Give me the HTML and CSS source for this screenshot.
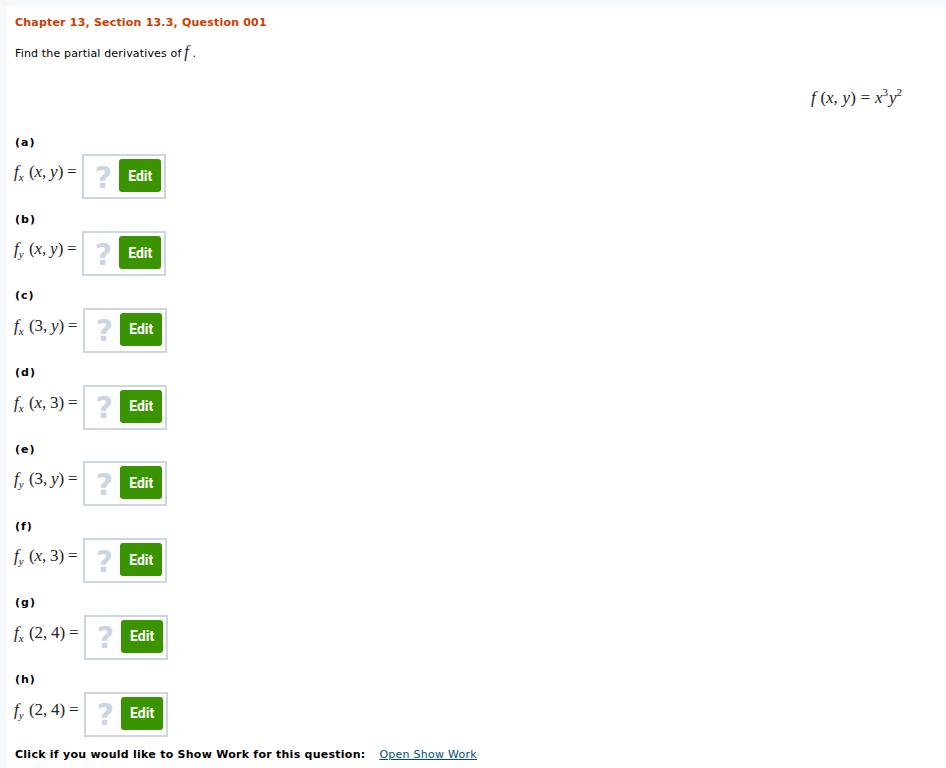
FILE: index.html
```html
<!DOCTYPE html>
<html lang="en">
<head>
  <meta charset="UTF-8">
  <title>Chapter 13, Section 13.3, Question 001</title>
  <link rel="stylesheet" href="styles.css">
</head>
<body>

  <div class="page">
    <h1 class="title">Chapter 13, Section 13.3, Question 001</h1>
    <p class="intro">Find the partial derivatives of <i class="math inline-f">f</i> .</p>

    <div class="equation math"><i>f</i> (<i>x</i>, <i>y</i>) = <i>x</i><sup>3</sup><i>y</i><sup>2</sup></div>

    <div class="part">
      <div class="part-label">(a)</div>
      <div class="part-row">
        <span class="math"><i>f<sub>x</sub></i> (<i>x</i>, <i>y</i>) =</span>
        <div class="answer"><span class="unknown">?</span><button class="edit-btn">Edit</button></div>
      </div>
    </div>

    <div class="part">
      <div class="part-label">(b)</div>
      <div class="part-row">
        <span class="math"><i>f<sub>y</sub></i> (<i>x</i>, <i>y</i>) =</span>
        <div class="answer"><span class="unknown">?</span><button class="edit-btn">Edit</button></div>
      </div>
    </div>

    <div class="part">
      <div class="part-label">(c)</div>
      <div class="part-row">
        <span class="math"><i>f<sub>x</sub></i> (3, <i>y</i>) =</span>
        <div class="answer"><span class="unknown">?</span><button class="edit-btn">Edit</button></div>
      </div>
    </div>

    <div class="part">
      <div class="part-label">(d)</div>
      <div class="part-row">
        <span class="math"><i>f<sub>x</sub></i> (<i>x</i>, 3) =</span>
        <div class="answer"><span class="unknown">?</span><button class="edit-btn">Edit</button></div>
      </div>
    </div>

    <div class="part">
      <div class="part-label">(e)</div>
      <div class="part-row">
        <span class="math"><i>f<sub>y</sub></i> (3, <i>y</i>) =</span>
        <div class="answer"><span class="unknown">?</span><button class="edit-btn">Edit</button></div>
      </div>
    </div>

    <div class="part">
      <div class="part-label">(f)</div>
      <div class="part-row">
        <span class="math"><i>f<sub>y</sub></i> (<i>x</i>, 3) =</span>
        <div class="answer"><span class="unknown">?</span><button class="edit-btn">Edit</button></div>
      </div>
    </div>

    <div class="part">
      <div class="part-label">(g)</div>
      <div class="part-row">
        <span class="math"><i>f<sub>x</sub></i> (2, 4) =</span>
        <div class="answer"><span class="unknown">?</span><button class="edit-btn">Edit</button></div>
      </div>
    </div>

    <div class="part">
      <div class="part-label">(h)</div>
      <div class="part-row">
        <span class="math"><i>f<sub>y</sub></i> (2, 4) =</span>
        <div class="answer"><span class="unknown">?</span><button class="edit-btn">Edit</button></div>
      </div>
    </div>

    <div class="show-work">
      <span>Click if you would like to Show Work for this question:</span>
      <a href="#">Open Show Work</a>
    </div>
  </div>

</body>
</html>
```

FILE: styles.css
```css
html, body {
  height: 100%;
}

body {
  margin: 0;
  background-color: #f4f8fb;
  font-family: "DejaVu Sans", sans-serif;
  font-size: 11px;
  color: #000;
  overflow: hidden;
}

.page {
  margin: 6px 0 0 6px;
  padding: 10px 9px 0 9px;
  background-color: #fff;
  height: 100%;
  box-sizing: border-box;
}

.title {
  margin: 0;
  font-size: 11px;
  line-height: 14px;
  font-weight: bold;
  letter-spacing: 0.2px;
  color: #cc3d00;
}

.intro {
  margin: 15px 0 0 0;
  line-height: 14px;
  font-size: 11px;
  letter-spacing: 0.16px;
}

.math {
  font-family: "Liberation Serif", serif;
  font-size: 17px;
  color: #222;
}

.math sub {
  font-size: 11px;
  line-height: 0;
  vertical-align: -4px;
  margin-right: 1.5px;
}

.math sup {
  font-size: 11px;
  line-height: 0;
  margin-right: 1px;
}

.inline-f {
  font-size: 16px;
  margin-left: -1px;
}

.equation {
  margin: 27px 34px 0 0;
  line-height: 20px;
  text-align: right;
  word-spacing: 0.5px;
}

.part {
  height: 76.75px;
}

.equation + .part {
  margin-top: 27.9px;
}

.part-label {
  line-height: 14px;
  font-weight: bold;
  letter-spacing: 1px;
}

.part-row {
  display: flex;
  align-items: center;
  gap: 5px;
  margin-top: 4.4px;
  word-spacing: -0.5px;
}

.part-row .math {
  margin-top: -9px;
  margin-left: -1px;
}

.answer {
  display: flex;
  width: 84.6px;
  height: 45px;
  box-sizing: border-box;
  border: 2px solid #ccd5e2;
  padding: 3px 3px 5px 0;
  justify-content: flex-end;
  align-items: center;
  gap: 7px;
}

.unknown {
  font-family: "DejaVu Sans", sans-serif;
  font-size: 30px;
  font-weight: bold;
  line-height: 33px;
  margin-top: 3px;
  color: #ccd5e2;
}

.edit-btn {
  width: 42px;
  height: 33px;
  padding: 0;
  border: none;
  border-radius: 3px;
  background-color: #3a9400;
  color: #fff;
  font-family: Roboto, sans-serif;
  font-size: 14px;
  font-weight: 700;
  cursor: pointer;
}

.show-work {
  display: flex;
  gap: 14px;
  margin-top: -1.5px;
  line-height: 14px;
  font-weight: bold;
  letter-spacing: 0.26px;
}

.show-work a {
  font-weight: normal;
  color: #00507f;
}
```
